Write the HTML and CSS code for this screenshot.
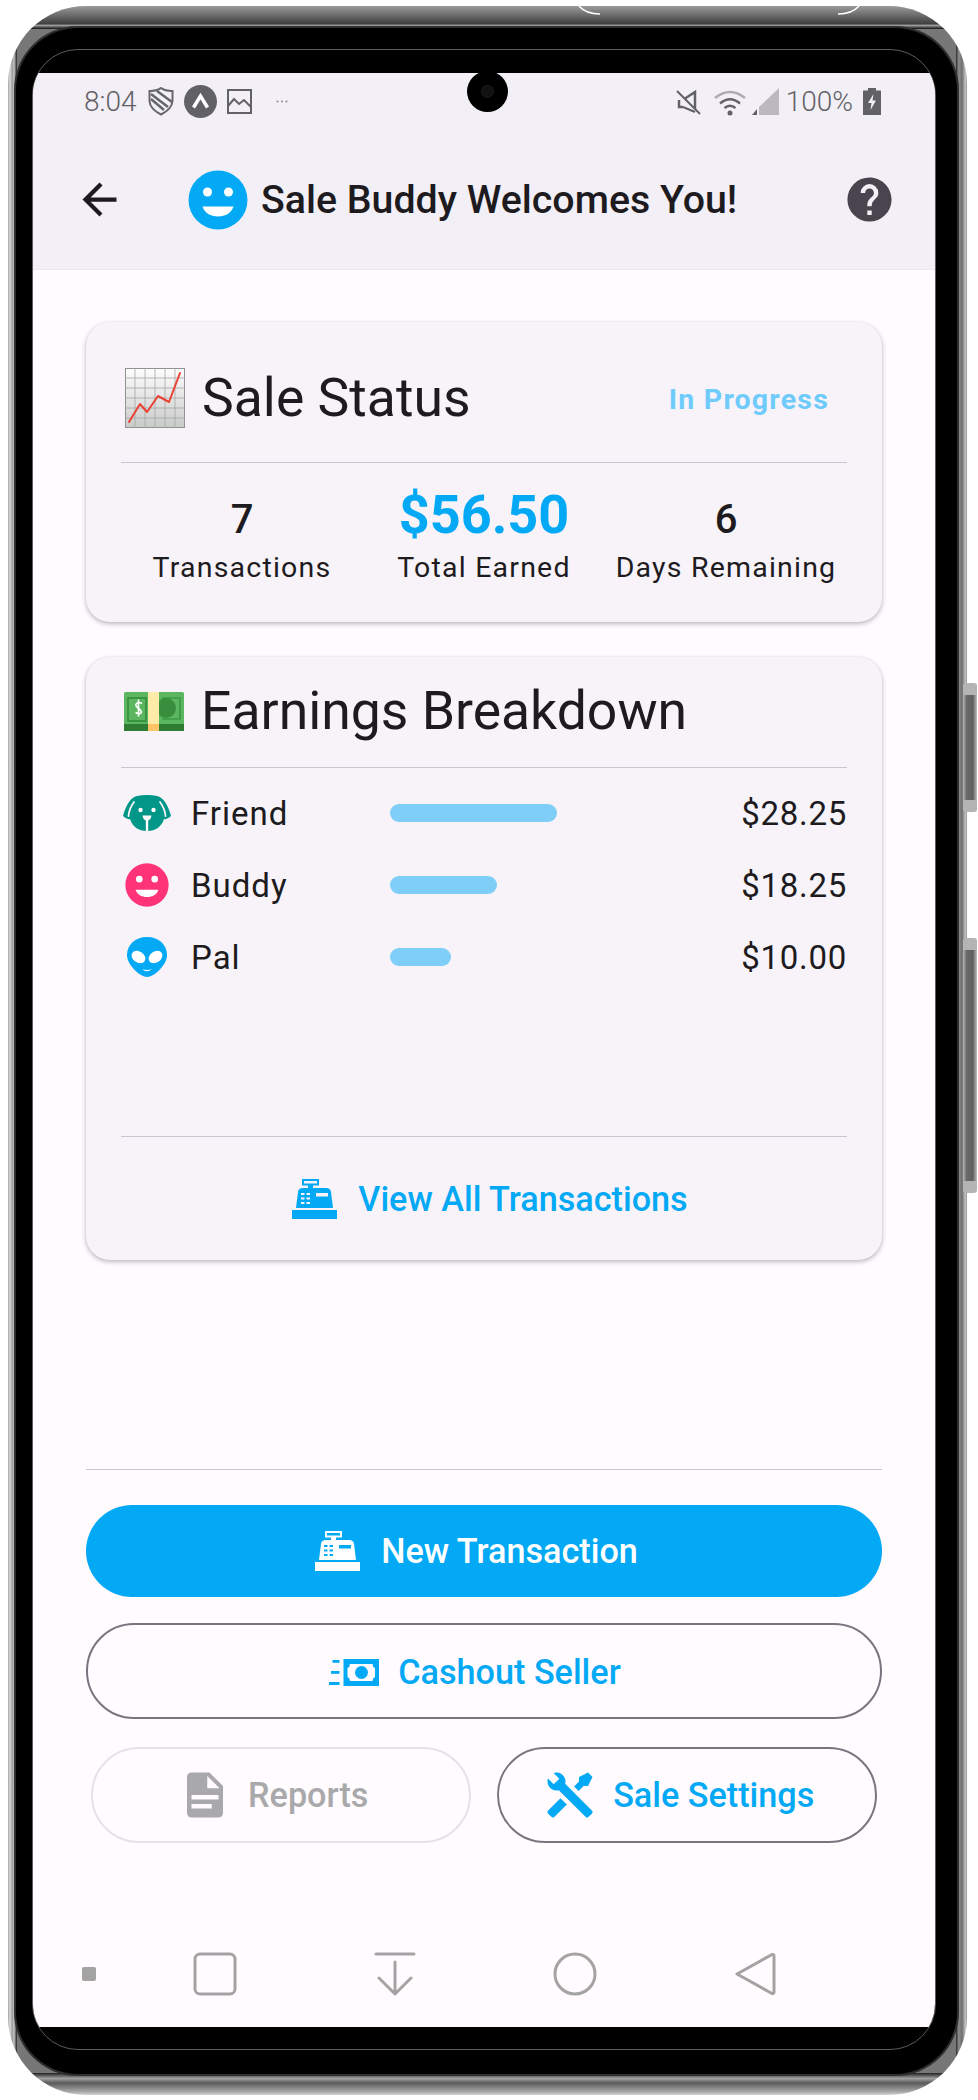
FILE: index.html
```html
<!DOCTYPE html>
<html lang="en">
<head>
<meta charset="utf-8">
<title>Sale Buddy</title>
<link rel="stylesheet" href="styles.css">
</head>
<body>
<svg class="defs" width="0" height="0" aria-hidden="true">
  <symbol id="register" viewBox="0 0 45 40">
    <rect x="0" y="31" width="45" height="9"/>
    <path fill-rule="evenodd" d="M10 0H27V6.500H21V9H34Q38.500 9 39 13L41 29H4L6 13Q6.500 9 11 9H16V6.500H10ZM12 2V4.500H25V2ZM9 14V16H12.500V14ZM14.500 14V16H18V14ZM9 18.500V20.500H12.500V18.500ZM14.500 18.500V20.500H18V18.500ZM9 23V25H12.500V23ZM14.500 23V25H18V23ZM24 14V17.500H36V14Z"/>
  </symbol>
  <symbol id="smile" viewBox="0 0 60 60">
    <circle cx="30" cy="30" r="29.500"/>
    <circle cx="19.500" cy="22" r="4.500" fill="#fff"/>
    <circle cx="40.500" cy="22" r="4.500" fill="#fff"/>
    <path d="M14.500 36.500H45.500C43.500 43 37.500 46.500 30 46.500S16.500 43 14.500 36.500Z" fill="#fff"/>
  </symbol>
</svg>

<div class="phone">
  <svg class="speaker" viewBox="0 0 282 10" aria-hidden="true"><path d="M1 0Q8 8 22 8M281 0Q274 8 260 8"/></svg>
  <div class="side-key side-key-a"></div>
  <div class="side-key side-key-b"></div>
  <div class="bezel">
    <div class="glass">
      <div class="camera"><span class="lens"></span></div>
      <div class="screen">
        <header class="header">
          <div class="status">
            <span class="clock">8:04</span>
            <svg class="st-shield" viewBox="0 0 26 29"><path d="M1.500 4Q8 4.500 13 1Q18 4.500 24.500 4V14Q24 22 13 27.500Q2 22 1.500 14Z" fill="none" stroke="#66656a" stroke-width="2"/><path d="M3 7L20 20M3 12L16 23M9 4L24 15" stroke="#66656a" stroke-width="2.500" fill="none"/></svg>
            <svg class="st-expo" viewBox="0 0 33 33"><circle cx="16.500" cy="16.500" r="16.500" fill="#626166"/><path d="M9.500 22.500L16.500 11L23.500 22.500" fill="none" stroke="#fff" stroke-width="3.500"/></svg>
            <svg class="st-image" viewBox="0 0 25 25"><rect x="1" y="1" width="23" height="23" fill="none" stroke="#626166" stroke-width="2"/><path d="M1 17L7 10L12 15L17 11L24 18" fill="none" stroke="#626166" stroke-width="2"/></svg>
            <svg class="st-dots" viewBox="0 0 12 3"><circle cx="1.500" cy="1.500" r="1" fill="#8b8a8e"/><circle cx="6" cy="1.500" r="1" fill="#8b8a8e"/><circle cx="10.500" cy="1.500" r="1" fill="#8b8a8e"/></svg>
            <span class="status-right">
              <svg class="st-mute" viewBox="0 0 26 26"><path d="M2 2L25 25" stroke="#626166" stroke-width="2"/><path d="M4 11V18H8M10 9.500L20 3V20" fill="none" stroke="#626166" stroke-width="2.500"/><path d="M8 18L20 23" stroke="#626166" stroke-width="2"/></svg>
              <svg class="st-wifi" viewBox="0 0 32 28"><path d="M1 10Q16 -2 31 10" fill="none" stroke="#aeaab0" stroke-width="2.400"/><path d="M6 15.500Q16 7 26 15.500" fill="none" stroke="#626166" stroke-width="2.400"/><path d="M10.500 20Q16 15.500 21.500 20" fill="none" stroke="#626166" stroke-width="2.400"/><circle cx="16" cy="25" r="2.500" fill="#626166"/></svg>
              <svg class="st-signal" viewBox="0 0 27 27"><path d="M27 0V27H7V19Z" fill="#bcb8bf"/><path d="M0 27L5 21V27Z" fill="#626166"/></svg>
              <span class="pct">100%</span>
              <svg class="st-batt" viewBox="0 0 18 27"><path fill-rule="evenodd" d="M5 0H13V2.500H18V27H0V2.500H5ZM10.500 6L5 15H8.500L7.500 22L13 12.500H9.500Z" fill="#626166"/></svg>
            </span>
          </div>
          <div class="appbar">
            <svg class="back" viewBox="0 0 24 24"><path d="M20 11H7.830l5.590-5.590L12 4l-8 8 8 8 1.410-1.410L7.830 13H20v-2z"/></svg>
            <svg class="title-smile"><use href="#smile"/></svg>
            <h1 class="title">Sale Buddy Welcomes You!</h1>
            <svg class="help" viewBox="0 0 24 24"><path d="M15.070,11.250L14.170,12.170C13.450,12.890 13,13.500 13,15H11V14.500C11,13.390 11.450,12.390 12.170,11.670L13.410,10.410C13.780,10.050 14,9.550 14,9C14,7.890 13.100,7 12,7A2,2 0 0,0 10,9H8A4,4 0 0,1 12,5A4,4 0 0,1 16,9C16,9.880 15.640,10.670 15.070,11.250M13,19H11V17H13M12,2A10,10 0 0,0 2,12A10,10 0 0,0 12,22A10,10 0 0,0 22,12C22,6.470 17.500,2 12,2Z"/></svg>
          </div>
        </header>

        <main class="main">
          <section class="card card-status">
            <div class="card-head card-head-status">
              <svg class="emoji-chart" viewBox="0 0 60 60">
                <defs><linearGradient id="chartbg" x1="0" y1="0" x2="0" y2="1"><stop offset="0" stop-color="#fdfdfd"/><stop offset="1" stop-color="#c9cbc9"/></linearGradient></defs>
                <rect x="0.500" y="0.500" width="59" height="59" fill="url(#chartbg)" stroke="#8e9290"/>
                <path d="M10 0V60M20 0V60M30 0V60M40 0V60M50 0V60M0 10H60M0 20H60M0 30H60M0 40H60M0 50H60" stroke="#a3a7a5" stroke-width="0.800"/>
                <path d="M4 54L15 36L22 44L33 28L44 34L55 5" fill="none" stroke="#ea4335" stroke-width="2" stroke-linejoin="round" stroke-linecap="round"/>
              </svg>
              <h2 class="card-title">Sale Status</h2>
              <span class="state">In Progress</span>
            </div>
            <div class="stats">
              <div class="stat"><span class="stat-value">7</span><span class="stat-label">Transactions</span></div>
              <div class="stat"><span class="stat-value stat-money">$56.50</span><span class="stat-label">Total Earned</span></div>
              <div class="stat"><span class="stat-value">6</span><span class="stat-label">Days Remaining</span></div>
            </div>
          </section>

          <section class="card card-earnings">
            <div class="card-head card-head-earn">
              <svg class="emoji-money" viewBox="0 0 60 39">
                <rect width="60" height="39" rx="1.500" fill="#5cb660"/>
                <rect y="32" width="60" height="7" fill="#2e7d32"/>
                <path d="M4 6H22V29H4Z" fill="none" stroke="#2e8b3a" stroke-width="1.500"/>
                <circle cx="42" cy="16" r="10" fill="#388e3c"/>
                <path d="M38 6H56V27H38" fill="none" stroke="#2e8b3a" stroke-width="1.200"/>
                <rect x="24" width="11" height="32" fill="#ffeaa7"/>
                <rect x="24" y="32" width="11" height="7" fill="#ffc466"/>
                <path d="M18 11.500Q14.500 9.500 12.500 11.500T14.500 16.500T17 21T11.500 20.500M14.500 7.500V24.500" fill="none" stroke="#fff" stroke-width="1.600"/>
              </svg>
              <h2 class="card-title">Earnings Breakdown</h2>
            </div>
            <div class="rows">
              <div class="row">
                <svg class="row-icon" viewBox="0 0 48 36"><path d="M14 1Q24 -1 34 1Q43 3 48 21Q44 25 41 24Q37 36 24 36Q11 36 7 24Q4 25 0 21Q5 3 14 1Z" fill="#009688"/><path d="M11 7Q6 14 5.500 21M37 7Q42 14 42.500 21" fill="none" stroke="#f7f4f9" stroke-width="1.800" stroke-linecap="round"/><circle cx="17.500" cy="15" r="2.200" fill="#fff"/><circle cx="30.500" cy="15" r="2.200" fill="#fff"/><path d="M19.500 20.500H28.500Q28 24.500 25.200 25.500V36H22.800V25.500Q20 24.500 19.500 20.500Z" fill="#fff"/></svg>
                <span class="row-name">Friend</span>
                <span class="row-track"><span class="bar" style="width:167px"></span></span>
                <span class="row-amount">$28.25</span>
              </div>
              <div class="row">
                <svg class="row-icon row-icon-smile"><use href="#smile"/></svg>
                <span class="row-name">Buddy</span>
                <span class="row-track"><span class="bar" style="width:107px"></span></span>
                <span class="row-amount">$18.25</span>
              </div>
              <div class="row">
                <svg class="row-icon row-icon-alien" viewBox="0 0 40 40"><path d="M20 0C32 0 40 8 40 18C40 28 27 40 20 40C13 40 0 28 0 18C0 8 8 0 20 0Z" fill="#03a9f4"/><ellipse cx="11.500" cy="20" rx="7.500" ry="5.500" fill="#fff" transform="rotate(35 11.500 20)"/><ellipse cx="28.500" cy="20" rx="7.500" ry="5.500" fill="#fff" transform="rotate(-35 28.500 20)"/><path d="M15 32Q20 34 25 32Q20 36.500 15 32Z" fill="#fff"/></svg>
                <span class="row-name">Pal</span>
                <span class="row-track"><span class="bar" style="width:61px"></span></span>
                <span class="row-amount">$10.00</span>
              </div>
            </div>
            <div class="card-link">
              <svg class="ic-register"><use href="#register"/></svg>
              <span>View All Transactions</span>
            </div>
          </section>

          <div class="actions">
            <button class="btn btn-primary" type="button"><svg class="ic-register"><use href="#register"/></svg><span>New Transaction</span></button>
            <button class="btn btn-outline btn-wide" type="button">
              <svg class="ic-cash" viewBox="0 0 50 27"><path fill-rule="evenodd" d="M14.500 0H50V27H14.500ZM21 5Q21 8 18.500 9V18Q21 19 21 22H43.500Q43.500 19 46 18V9Q43.500 8 43.500 5Z"/><circle cx="32.500" cy="13.500" r="6.500"/><rect x="3.500" y="1" width="7" height="2.800"/><rect x="2" y="12" width="8.500" height="2.800"/><rect x="0" y="23" width="10.500" height="3"/></svg>
              <span>Cashout Seller</span>
            </button>
            <div class="btn-row">
              <button class="btn btn-disabled" type="button"><svg class="ic-24" viewBox="0 0 24 24"><path d="M13,9H18.500L13,3.500V9M6,2H14L20,8V20A2,2 0 0,1 18,22H6C4.890,22 4,21.100 4,20V4C4,2.890 4.890,2 6,2M15,18V16H6V18H15M18,14V12H6V14H18Z"/></svg><span>Reports</span></button>
              <button class="btn btn-outline btn-settings" type="button"><svg class="ic-24" viewBox="0 0 24 24"><path d="M21.710 20.290L20.290 21.710A1 1 0 0 1 18.880 21.710L7 9.850A3.810 3.810 0 0 1 6 10A4 4 0 0 1 2.220 4.700L4.760 7.240L5.290 6.710L6.710 5.290L7.240 4.760L4.700 2.220A4 4 0 0 1 10 6A3.810 3.810 0 0 1 9.850 7L21.710 18.880A1 1 0 0 1 21.710 20.290M2.290 18.880A1 1 0 0 0 2.290 20.290L3.710 21.710A1 1 0 0 0 5.120 21.710L10.590 16.250L7.760 13.420M20 2L16 4V6L13.830 8.170L15.830 10.170L18 8H20L22 4Z"/></svg><span>Sale Settings</span></button>
            </div>
          </div>
        </main>

        <nav class="nav">
          <span class="nav-dot"></span>
          <span class="nav-item"><svg viewBox="0 0 44 44"><rect x="2" y="2" width="40" height="40" rx="5" fill="none" stroke="#a3a3a3" stroke-width="3"/></svg></span>
          <span class="nav-item"><svg viewBox="0 0 44 44"><path d="M3 2H41M22 10V41M6 26L22 42L38 26" fill="none" stroke="#a3a3a3" stroke-width="3" stroke-linecap="round" stroke-linejoin="round"/></svg></span>
          <span class="nav-item"><svg viewBox="0 0 44 44"><circle cx="22" cy="22" r="20" fill="none" stroke="#a3a3a3" stroke-width="3"/></svg></span>
          <span class="nav-item"><svg viewBox="0 0 44 44"><path d="M4 22L39 2.500Q41 2 41 4V40Q41 42 39 41.500Z" fill="none" stroke="#a3a3a3" stroke-width="3" stroke-linejoin="round"/></svg></span>
        </nav>
      </div>
    </div>
  </div>
</div>
</body>
</html>
```

FILE: styles.css
```css
* { box-sizing: border-box; }
html, body { margin: 0; padding: 0; background: #fff; }
body { font-family: Roboto, "Liberation Sans", sans-serif; color: #1d1b20; }
h1, h2 { margin: 0; }
.defs { position: absolute; }
svg { display: block; flex: none; }

.phone {
  position: relative;
  width: 959px;
  height: 2089px;
  margin: 6px 11px 5px 8px;
  padding: 22px 10px 21px 8px;
  border-radius: 78px;
  background-color: #777;
  background-image:
    linear-gradient(180deg, #9a9a9a 0, #6c6c6c 40%, #3f3f3f 78%, #a0a0a0 84%, #555 92%, #111 100%),
    linear-gradient(0deg, #d4d4d4 0, #a8a8a8 15%, #5a5a5a 55%, #a0a0a0 75%, #222 100%),
    linear-gradient(90deg, #a0a0a0 0, #dadada 22%, #9a9a9a 48%, #c8c8c8 66%, #777 82%, #222 100%),
    linear-gradient(90deg, #2a2a2a 0, #8d8d8d 25%, #6d6d6d 55%, #c4c4c4 85%, #8c8c8c 100%);
  background-size: 100% 23px, 100% 22px, 9px 100%, 11px 100%;
  background-position: 0 0, 0 100%, 0 0, 100% 0;
  background-repeat: no-repeat;
}
.speaker { position: absolute; top: 0; left: 570px; width: 282px; height: 10px; }
.speaker path { fill: none; stroke: #fff; stroke-width: 1.500; }
.side-key {
  position: absolute;
  right: -10px;
  width: 14px;
  border-radius: 3px;
  background: linear-gradient(90deg, #b8b8b8 0, #6a6a6a 25%, #5e5e5e 70%, #bdbdbd 100%);
  border-top: 12px solid #b4b4b4;
  border-bottom: 12px solid #b4b4b4;
}
.side-key-a { top: 677px; height: 129px; }
.side-key-b { top: 932px; height: 255px; }

.bezel {
  height: 100%;
  padding: 21px 21px 24px 16px;
  border-radius: 62px;
  background: #000;
  box-shadow: 0 0 0 2px #2e2e2e;
}
.glass {
  position: relative;
  height: 100%;
  padding: 23px 0 22px;
  overflow: hidden;
  border: 1px solid #5c5c5c;
  border-radius: 46px;
  background: #000;
}
.camera {
  position: absolute;
  top: 21px;
  left: 434px;
  display: flex;
  align-items: center;
  justify-content: center;
  width: 41px;
  height: 41px;
  border-radius: 50%;
  background: #000;
}
.lens { width: 13px; height: 13px; border-radius: 50%; background: #111; border: 1px solid #1e1c16; }
.screen {
  display: flex;
  flex-direction: column;
  height: 100%;
  background: #fffbfe;
}

.header { height: 197px; background: #f3eff6; border-bottom: 1px solid #ece8ee; }
.status {
  display: flex;
  align-items: center;
  height: 57px;
  padding: 0 54px 0 51px;
  color: #626166;
}
.clock { font-size: 28px; font-weight: 300; width: 55px; margin-right: 9px; }
.st-shield { width: 26px; height: 29px; margin-right: 10px; }
.st-expo { width: 33px; height: 33px; margin-right: 10px; }
.st-image { width: 25px; height: 25px; margin-right: 24px; }
.st-dots { width: 12px; height: 3px; }
.status-right { display: flex; align-items: center; margin-left: auto; }
.st-mute { width: 26px; height: 26px; margin-right: 12px; }
.st-wifi { width: 34px; height: 28px; margin-right: 5px; }
.st-signal { width: 27px; height: 27px; margin-right: 7px; }
.pct { font-size: 28px; font-weight: 300; margin-right: 10px; }
.st-batt { width: 18px; height: 27px; }

.appbar { display: flex; align-items: center; height: 139px; padding: 0 39px 0 41px; }
.back { width: 51px; height: 51px; fill: #1d1b20; margin-right: 63px; }
.title-smile { width: 60px; height: 60px; fill: #03a9f4; margin-right: 13px; }
.title { font-size: 39.300px; font-weight: 500; line-height: 1; margin-top: 3px; }
.help { width: 53px; height: 53px; fill: #49454f; margin-left: auto; }

.main {
  flex: 1;
  display: flex;
  flex-direction: column;
  gap: 35px;
  padding: 52px 53px 78px;
}
.card {
  display: flex;
  flex-direction: column;
  padding: 0 35px;
  border-radius: 24px;
  background: #f7f3f9;
  box-shadow: 0 2px 5px rgba(0, 0, 0, .26), 0 0 2px rgba(0, 0, 0, .08);
}
.card-status { height: 300px; }
.card-earnings { height: 603px; }
.card-head { display: flex; align-items: center; border-bottom: 1px solid #cac4d0; }
.card-head-status { height: 141px; padding-top: 12px; }
.card-head-earn { height: 111px; padding-bottom: 2px; }
.emoji-chart { width: 60px; height: 60px; margin: 0 17px 0 4px; }
.emoji-money { width: 60px; height: 39px; margin: 0 17px 0 3px; }
.card-title { font-size: 53.500px; font-weight: 400; line-height: 1; }
.state {
  margin: 3px 18px 0 auto;
  font-size: 28.500px;
  font-weight: 700;
  letter-spacing: 1.200px;
  color: #6fcbfb;
}

.stats { display: grid; grid-template-columns: repeat(3, 1fr); align-items: baseline; padding-top: 18px; }
.stat { display: flex; flex-direction: column; align-items: center; }
.stat-value { font-size: 40px; font-weight: 500; line-height: 58px; }
.stat-money { font-size: 54px; font-weight: 700; line-height: 67.600px; color: #03a9f4; }
.stat-label { font-size: 28.500px; letter-spacing: 1.200px; line-height: 38px; white-space: nowrap; }

.rows { flex: 1; padding-top: 9px; }
.row { display: flex; align-items: center; height: 72px; }
.row-icon { width: 48px; height: 36px; margin: 0 20px 0 2px; }
.row-icon-smile { width: 44px; height: 44px; margin: 0 22px 0 4px; fill: #ff3377; }
.row-icon-alien { width: 40px; height: 40px; margin: 0 24px 0 6px; }
.row-name { width: 199px; font-size: 33px; letter-spacing: 1px; }
.row-track { flex: 1; }
.bar { display: block; height: 18px; border-radius: 9px; background: #7fcef8; }
.row-amount { font-size: 33px; letter-spacing: .700px; }
.card-link {
  display: flex;
  align-items: center;
  justify-content: center;
  height: 124px;
  gap: 21px;
  border-top: 1px solid #cac4d0;
  color: #03a9f4;
  font-size: 34.200px;
  font-weight: 500;
  padding-left: 12px;
}
.ic-register { width: 45px; height: 40px; fill: currentColor; }

.actions {
  margin-top: auto;
  display: flex;
  flex-direction: column;
  gap: 26px;
  padding-top: 35px;
  border-top: 1px solid #cac4d0;
}
.btn {
  display: flex;
  align-items: center;
  justify-content: center;
  height: 96px;
  padding: 0;
  border: 2px solid #79747e;
  border-radius: 48px;
  background: transparent;
  color: #03a9f4;
  font-family: inherit;
  font-size: 34.200px;
  font-weight: 500;
}
.btn-primary { height: 92px; border: 0; background: #03a9f4; color: #fff; gap: 21px; padding-right: 15px; }
.btn-wide { gap: 19px; padding: 2px 18px 0 0; }
.btn-row { display: flex; gap: 26px; padding: 2px 5px 0 5px; }
.btn-row .btn { flex: 1 1 0; gap: 16px; padding-right: 15px; }
.btn-row .btn-settings { padding-right: 16px; }
.btn-disabled { border-color: #e6e1e5; color: #a9a8ab; }
.ic-cash { width: 50px; height: 27px; fill: currentColor; }
.ic-24 { width: 54px; height: 54px; fill: currentColor; }

.nav { display: flex; align-items: center; height: 106px; padding-left: 49px; }
.nav-dot { width: 14px; height: 14px; margin-right: 29px; border-radius: 2px; background: #a3a3a3; }
.nav-item { display: flex; justify-content: center; width: 180px; }
.nav-item svg { width: 44px; height: 44px; }
```
